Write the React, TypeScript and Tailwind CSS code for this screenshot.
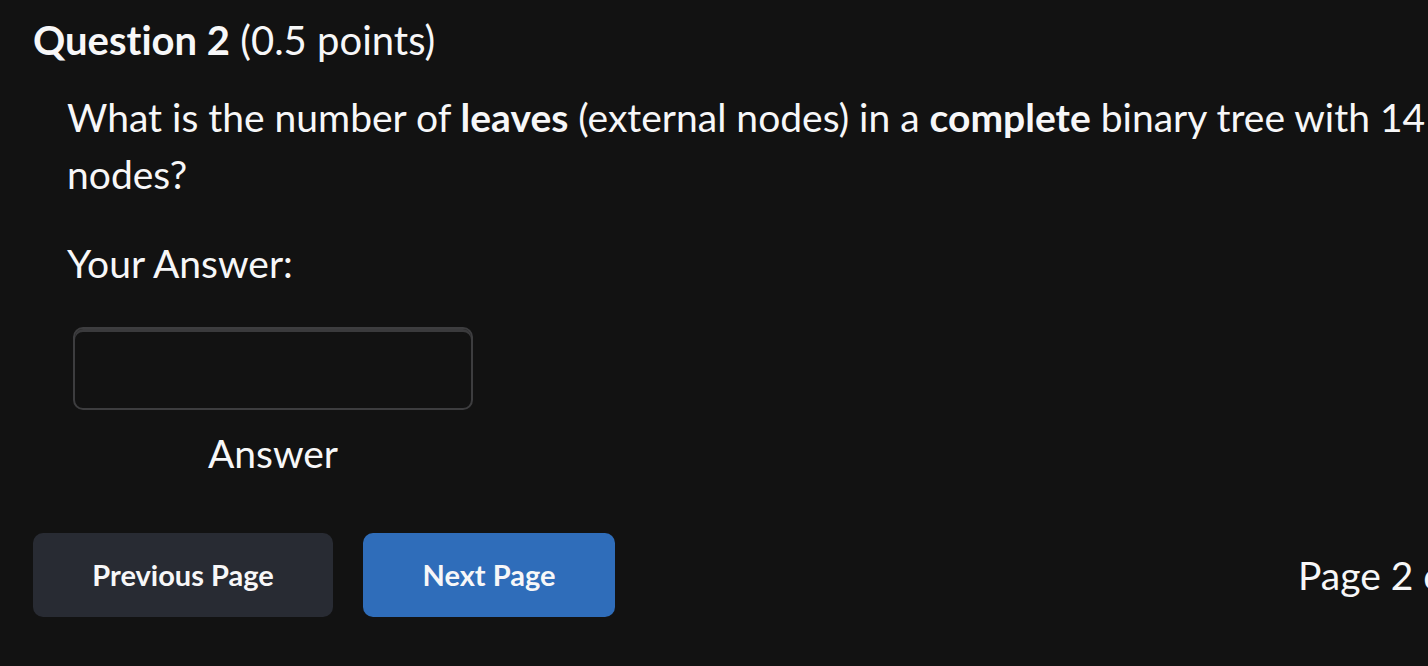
export default function App() {
  return (
    <div className="min-h-screen w-full overflow-hidden bg-[#121212] text-[#f7f7f8] font-['Lato',sans-serif] [font-variant-ligatures:none]">
      <div className="w-[1520px] pl-[33px] pt-[13px]">
        <h2 className="text-[40px] leading-[55px]">
          <span className="font-bold">Question 2</span> (0.5 points)
        </h2>

        <div className="pl-[34px] pt-[21px]">
          <p className="w-[1380px] text-[39px] leading-[57px]">
            What is the number of <strong className="font-bold">leaves</strong> (external nodes) in a{" "}
            <strong className="font-bold">complete</strong> binary tree with 14 nodes?
          </p>

          <p className="mt-[32px] text-[39px] leading-[57px]">Your Answer:</p>

          <div className="mt-[35px] ml-[6px] flex w-[400px] flex-col items-center">
            <input
              type="text"
              aria-label="Answer"
              className="h-[83px] w-full rounded-[10px] border-2 border-[#3d3d3f] bg-[#121212] px-4 text-[39px] text-white shadow-[inset_0_3px_0_#3a3a3c] outline-none"
            />
            <label className="mt-[17px] text-[39px] leading-[52px]">Answer</label>
          </div>
        </div>

        <div className="mt-[54px] flex items-center">
          <button
            type="button"
            className="h-[84px] w-[300px] rounded-[10px] bg-[#282b33] text-[29px] font-bold"
          >
            Previous Page
          </button>
          <button
            type="button"
            className="ml-[30px] h-[84px] w-[252px] rounded-[10px] bg-[#2f6dba] text-[29px] font-bold"
          >
            Next Page
          </button>
          <span className="ml-[683px] whitespace-nowrap text-[39px]">Page 2 of 5</span>
        </div>
      </div>
    </div>
  );
}
